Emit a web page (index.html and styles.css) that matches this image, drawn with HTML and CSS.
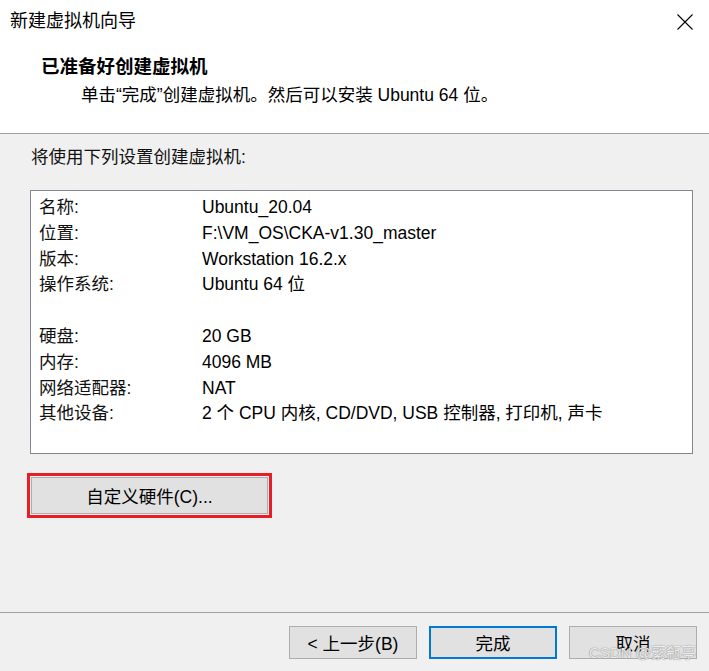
FILE: index.html
```html
<!DOCTYPE html>
<html lang="zh-CN">
<head>
<meta charset="utf-8">
<title>新建虚拟机向导</title>
<link rel="stylesheet" href="styles.css">
</head>
<body>
<div class="window">
  <div class="titlebar">
    <span class="title">新建虚拟机向导</span>
    <svg class="close" width="16" height="16" viewBox="0 0 16 16"><path d="M0.5 0.5 L15.5 15.5 M15.5 0.5 L0.5 15.5" stroke="#000" stroke-width="1.1" fill="none"/></svg>
  </div>
  <div class="header">
    <div class="h-title">已准备好创建虚拟机</div>
    <div class="h-sub">单击“完成”创建虚拟机。然后可以安装 Ubuntu 64 位。</div>
  </div>
  <div class="content">
    <div class="lead">将使用下列设置创建虚拟机:</div>
    <div class="summary">
      <div class="k">名称:</div><div class="v">Ubuntu_20.04</div>
      <div class="k">位置:</div><div class="v">F:\VM_OS\CKA-v1.30_master</div>
      <div class="k">版本:</div><div class="v">Workstation 16.2.x</div>
      <div class="k">操作系统:</div><div class="v">Ubuntu 64 位</div>
      <div class="k blank"></div><div class="v blank"></div>
      <div class="k">硬盘:</div><div class="v">20 GB</div>
      <div class="k">内存:</div><div class="v">4096 MB</div>
      <div class="k">网络适配器:</div><div class="v">NAT</div>
      <div class="k">其他设备:</div><div class="v">2 个 CPU 内核, CD/DVD, USB 控制器, 打印机, 声卡</div>
    </div>
    <button class="btn custom">自定义硬件(C)...</button>
  </div>
  <div class="footer">
    <button class="btn nav">&lt; 上一步(B)</button>
    <button class="btn nav primary">完成</button>
    <button class="btn nav">取消</button>
  </div>
  <div class="watermark">CSDN @蘩瓻亭</div>
</div>
</body>
</html>
```
FILE: styles.css
```css
* { box-sizing: border-box; }
html, body { margin: 0; padding: 0; }
body {
  width: 709px;
  height: 671px;
  overflow: hidden;
  background: #f0f0f0;
  font-family: "Liberation Sans", "Noto Sans CJK SC", sans-serif;
  font-size: 17.5px;
  color: #000;
}
.window {
  position: relative;
  display: flex;
  flex-direction: column;
  width: 709px;
  height: 671px;
}
.titlebar {
  height: 42px;
  background: #fff;
  display: flex;
  align-items: center;
  justify-content: space-between;
  padding: 0 16px 0 10px;
}
.title { font-size: 18px; line-height: 24px; }
.close { display: block; margin-top: 1px; }
.header {
  background: #fff;
  height: 92px;
  border-bottom: 1px solid #a0a0a0;
  padding: 13px 0 0 41px;
}
.h-title {
  font-weight: bold;
  font-size: 18.5px;
  line-height: 24px;
}
.h-sub {
  margin-top: 4px;
  padding-left: 40px;
  line-height: 24px;
}
.content {
  padding: 11px 16px 0 30px;
  display: flex;
  flex-direction: column;
  align-items: flex-start;
}
.lead {
  line-height: 24px;
  padding-left: 1px;
  color: #111;
}
.summary {
  margin-top: 21px;
  align-self: stretch;
  height: 264px;
  background: #fff;
  border: 1px solid #828790;
  padding: 4px 0 0 8px;
  display: grid;
  grid-template-columns: 163px 1fr;
  grid-auto-rows: 25.8px;
  align-content: start;
  line-height: 25.8px;
}
.k { color: #111; white-space: nowrap; }
.v { white-space: nowrap; }
.btn {
  font-family: inherit;
  font-size: 17.5px;
  color: #000;
  background: #e1e1e1;
  border: 1px solid #adadad;
  border-radius: 0;
  padding: 0;
  margin: 0;
}
.custom {
  margin: 23px 0 0 1px;
  width: 237px;
  height: 37px;
  outline: 3px solid #e81d25;
  outline-offset: 1px;
}
.footer {
  margin-top: auto;
  height: 59px;
  border-top: 1px solid #a0a0a0;
  display: flex;
  justify-content: flex-end;
  align-items: flex-start;
  gap: 12px;
  padding: 13px 12px 0 0;
}
.nav {
  width: 128px;
  height: 33px;
}
.primary {
  border: 2px solid #0078d7;
}
.watermark {
  position: absolute;
  right: 13px;
  bottom: 9px;
  font-family: "Liberation Sans", "Noto Sans CJK SC", sans-serif;
  font-size: 15px;
  color: rgba(255, 255, 255, 0.85);
  text-shadow: 0 0 1px #8a8a8a, 0 0 1px #8a8a8a;
  pointer-events: none;
}
```
